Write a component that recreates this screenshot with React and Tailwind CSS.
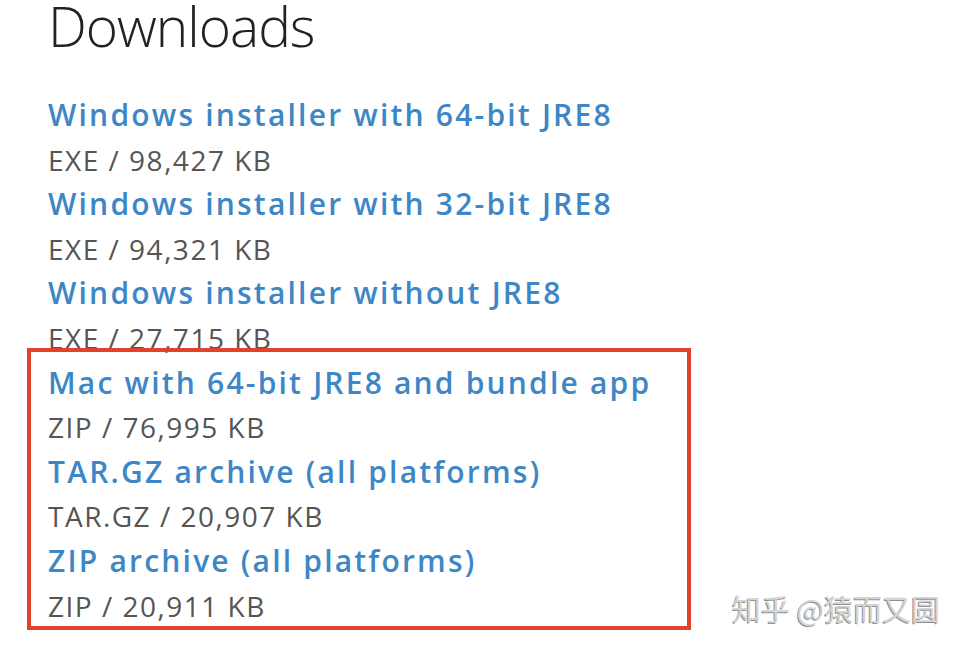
const downloads = [
  { label: 'Windows installer with 64-bit JRE8', size: 'EXE / 98,427 KB' },
  { label: 'Windows installer with 32-bit JRE8', size: 'EXE / 94,321 KB' },
  { label: 'Windows installer without JRE8', size: 'EXE / 27,715 KB' },
  { label: 'Mac with 64-bit JRE8 and bundle app', size: 'ZIP / 76,995 KB' },
  { label: 'TAR.GZ archive (all platforms)', size: 'TAR.GZ / 20,907 KB' },
  { label: 'ZIP archive (all platforms)', size: 'ZIP / 20,911 KB' },
];

const App = () => {
  return (
    <div className="relative h-[650px] w-full overflow-hidden bg-white font-['Open_Sans',sans-serif]">
      <div className="pl-12">
        {/* Heading */}
        <h1 className="text-[55px] font-light leading-[52px] tracking-[-1px] text-[#222]">Downloads</h1>

        {/* Download list */}
        <ul className="mt-[41px]">
          {downloads.map((d) => (
            <li key={d.label}>
              <a href="#" className="block text-[30px] font-semibold leading-[44.6px] tracking-[2.2px] text-[#3d87c6]">
                {d.label}
              </a>
              <div className="text-[28px] leading-[44.6px] tracking-[1.5px] text-[#555]">{d.size}</div>
            </li>
          ))}
        </ul>
      </div>

      {/* Red highlight box */}
      <div className="absolute left-[27px] top-[348px] h-[282px] w-[664px] border-4 border-[#e2412c]" />

      {/* Watermark */}
      <div className="absolute left-[732px] top-[589px] font-['Noto_Sans_CJK_SC',sans-serif] text-[29px] leading-[38px] text-[#d4d4d4] [text-shadow:-1px_1px_0_#8f8f8f]">
        知乎 @猿而又圆
      </div>
    </div>
  );
};

export default App;
